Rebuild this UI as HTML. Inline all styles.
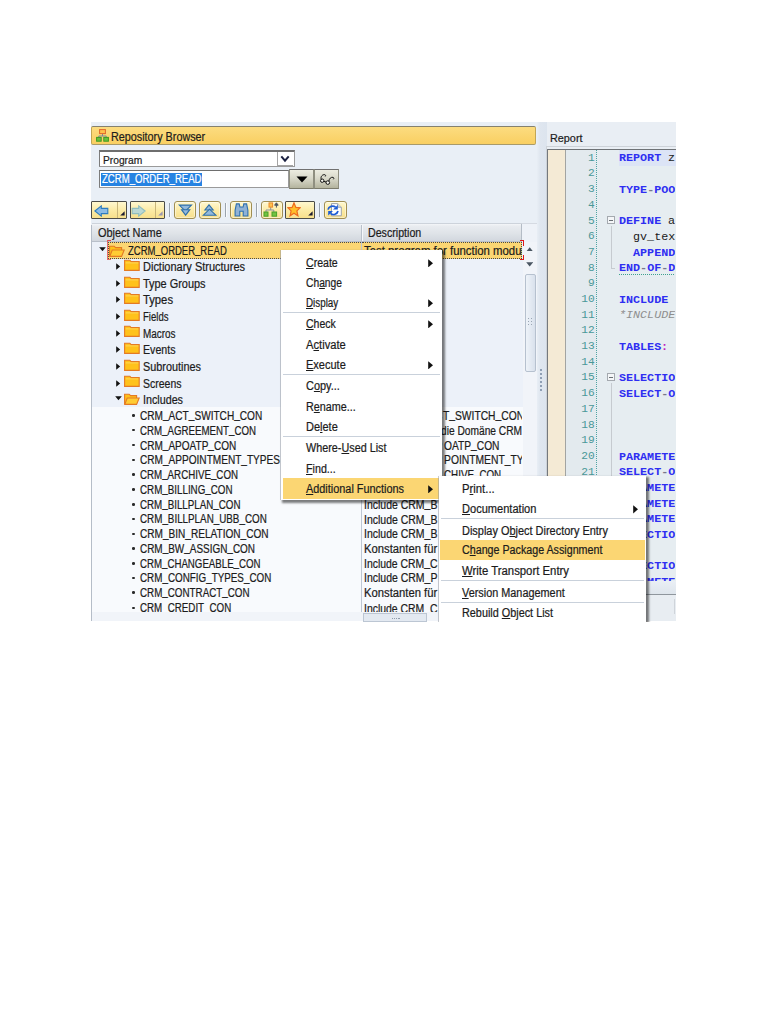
<!DOCTYPE html><html><head><meta charset="utf-8"><title>Repository Browser</title><style>html,body{margin:0;padding:0;background:#fff}body{width:768px;height:1024px;position:relative;overflow:hidden}u{text-decoration:underline;text-underline-offset:1px}.us{position:relative;top:-1.6px}</style></head><body><div style="position:absolute;left:91px;top:122px;width:585px;height:499.5px;overflow:hidden"><div style="position:absolute;left:-91px;top:-122px;width:768px;height:1024px"><div style="position:absolute;left:91px;top:122px;width:446px;height:499.3px;background:#E9EFF6"></div><div style="position:absolute;left:91.4px;top:126.2px;width:445.0px;height:18.5px;background:linear-gradient(#FCDC80,#F9CF62);border:1px solid #C2A654;border-top:1.5px solid #85816f;border-bottom-color:#A89A6A;border-radius:2px;box-sizing:border-box"></div><svg style="position:absolute;left:95.5px;top:129.4px" width="13" height="13" viewBox="0 0 13 13">
<path d="M6.5 4.5v2.5M2.8 9V7h7.4v2" fill="none" stroke="#7d8a99" stroke-width="1"/>
<rect x="3.6" y="0.6" width="5.8" height="4" fill="#FFC04A" stroke="#E0662A" stroke-width="1"/>
<rect x="0.6" y="8.4" width="4.6" height="3.8" fill="#6CC03C" stroke="#3E9A22" stroke-width="1"/>
<rect x="7.8" y="8.4" width="4.6" height="3.8" fill="#6CC03C" stroke="#3E9A22" stroke-width="1"/></svg><div style="position:absolute;left:99px;top:150.2px;width:195.5px;height:16.8px;background:#fff;border:1px solid #9a9a9a;border-top:2px solid #6e6e6e;border-left-color:#7c7c7c;box-sizing:border-box"></div><div style="position:absolute;left:277.3px;top:152.2px;width:16.2px;height:13.8px;background:#fff;border-left:1px solid #a4a4a4;border-bottom:1px solid #a4a4a4;box-sizing:border-box"></div><svg style="position:absolute;left:280px;top:155px" width="10" height="8" viewBox="0 0 10 8"><path d="M1.3 1.3L5 5.6L8.7 1.3" fill="none" stroke="#1a2040" stroke-width="2"/></svg><div style="position:absolute;left:99px;top:170px;width:189.6px;height:18px;background:#fff;border:1px solid #9a9a9a;border-top:1.5px solid #6e6e6e;border-left-color:#7c7c7c;box-sizing:border-box"></div><div style="position:absolute;left:101px;top:172.5px;width:101px;height:13.3px;background:#2683E2"></div><div style="position:absolute;left:288.8px;top:169px;width:25.4px;height:19.6px;background:linear-gradient(#EDEDE1,#D9D9CA 45%,#B4B49E);border:1px solid #8f8f80;border-top:1.6px solid #707070;border-bottom:1.6px solid #7c7c6c;box-sizing:border-box"></div><div style="position:absolute;left:314.2px;top:169px;width:24.8px;height:19.6px;background:linear-gradient(#EDEDE1,#D9D9CA 45%,#B4B49E);border:1px solid #8f8f80;border-top:1.6px solid #707070;border-bottom:1.6px solid #7c7c6c;box-sizing:border-box"></div><svg style="position:absolute;left:296px;top:175.5px" width="12" height="7" viewBox="0 0 12 7"><path d="M0.5 0.5h11L6 6.5z" fill="#000"/></svg><svg style="position:absolute;left:319px;top:173px" width="17" height="13" viewBox="0 0 17 13">
<circle cx="3.2" cy="7.7" r="1.7" fill="#f4f4ec" stroke="#111" stroke-width="1"/>
<circle cx="8.8" cy="9.6" r="1.8" fill="#f4f4ec" stroke="#111" stroke-width="1"/>
<path d="M4.8 8.3L7.1 9.1" fill="none" stroke="#111" stroke-width="1"/>
<path d="M2.2 6.3C1.4 3.6 3.4 1.3 5.8 1.7C6.8 1.9 6.9 3 6.2 3.5" fill="none" stroke="#111" stroke-width="1"/>
<path d="M9.9 8.2C10.1 5.6 12 3.9 14 4.3C15 4.6 15 5.9 14.4 6.3" fill="none" stroke="#111" stroke-width="1"/></svg><div style="position:absolute;left:91px;top:200.6px;width:36.4px;height:18.4px;background:linear-gradient(#FFF8D0,#FCEBA6 50%,#F8E08C);box-sizing:border-box;border:1px solid #4c4c48;border-radius:1px;"></div><div style="position:absolute;left:116.6px;top:201.6px;width:1.0px;height:16.4px;background:#c9b67a"></div><div style="position:absolute;left:129.6px;top:200.6px;width:35.8px;height:18.4px;background:linear-gradient(#FFF8D0,#FCEBA6 50%,#F8E08C);box-sizing:border-box;border:1px solid #4c4c48;border-radius:1px;"></div><div style="position:absolute;left:155px;top:201.6px;width:1px;height:16.4px;background:#c9b67a"></div><div style="position:absolute;left:174px;top:200.6px;width:22.4px;height:18.4px;background:linear-gradient(#FFF8D0,#FCEBA6 50%,#F8E08C);box-sizing:border-box;border:1px solid #A08E52;border-radius:3px;box-shadow:inset 0 0 0 1px rgba(255,255,255,.45);"></div><div style="position:absolute;left:198.7px;top:200.6px;width:22.1px;height:18.4px;background:linear-gradient(#FFF8D0,#FCEBA6 50%,#F8E08C);box-sizing:border-box;border:1px solid #A08E52;border-radius:3px;box-shadow:inset 0 0 0 1px rgba(255,255,255,.45);"></div><div style="position:absolute;left:230.3px;top:200.6px;width:21.3px;height:18.4px;background:linear-gradient(#FFF8D0,#FCEBA6 50%,#F8E08C);box-sizing:border-box;border:1px solid #A08E52;border-radius:3px;box-shadow:inset 0 0 0 1px rgba(255,255,255,.45);"></div><div style="position:absolute;left:261px;top:200.6px;width:21.8px;height:18.4px;background:linear-gradient(#FFF8D0,#FCEBA6 50%,#F8E08C);box-sizing:border-box;border:1px solid #A08E52;border-radius:3px;box-shadow:inset 0 0 0 1px rgba(255,255,255,.45);"></div><div style="position:absolute;left:284.7px;top:200.6px;width:30.1px;height:18.4px;background:linear-gradient(#FFF8D0,#FCEBA6 50%,#F8E08C);box-sizing:border-box;border:1px solid #4c4c48;border-radius:1px;"></div><div style="position:absolute;left:324px;top:200.6px;width:22.6px;height:18.4px;background:linear-gradient(#FFF8D0,#FCEBA6 50%,#F8E08C);box-sizing:border-box;border:1px solid #A08E52;border-radius:3px;box-shadow:inset 0 0 0 1px rgba(255,255,255,.45);"></div><div style="position:absolute;left:169px;top:202.5px;width:1px;height:14.0px;background:#9aa3ad"></div><div style="position:absolute;left:170px;top:202.5px;width:1px;height:14.0px;background:#f8fafc"></div><div style="position:absolute;left:224.6px;top:202.5px;width:1.0px;height:14.0px;background:#9aa3ad"></div><div style="position:absolute;left:225.6px;top:202.5px;width:1.0px;height:14.0px;background:#f8fafc"></div><div style="position:absolute;left:255.6px;top:202.5px;width:1.0px;height:14.0px;background:#9aa3ad"></div><div style="position:absolute;left:256.6px;top:202.5px;width:1.0px;height:14.0px;background:#f8fafc"></div><div style="position:absolute;left:319.4px;top:202.5px;width:1.0px;height:14.0px;background:#9aa3ad"></div><div style="position:absolute;left:320.4px;top:202.5px;width:1.0px;height:14.0px;background:#f8fafc"></div><svg style="position:absolute;left:93.5px;top:204.5px" width="15" height="12" viewBox="0 0 15 12"><path d="M0.9 6L7.3 0.9V3.4h6.5v5.2H7.3v2.5z" fill="#8CBCE6" stroke="#2E7CC0" stroke-width="1.1"/></svg><svg style="position:absolute;left:120px;top:211px" width="5" height="5" viewBox="0 0 5 5"><path d="M4.6 0.2v4.4h-4.4z" fill="#1c1c30"/></svg><svg style="position:absolute;left:131px;top:204.5px" width="15" height="12" viewBox="0 0 15 12"><path d="M14.1 6L7.7 0.9V3.4H1.2v5.2h6.5v2.5z" fill="#BBD8D4" stroke="#90BEC0" stroke-width="1.1"/></svg><svg style="position:absolute;left:157.6px;top:211px" width="5" height="5" viewBox="0 0 5 5"><path d="M4.6 0.2v4.4h-4.4z" fill="#9a96b0"/></svg><svg style="position:absolute;left:178px;top:203.5px" width="15" height="12" viewBox="0 0 15 12"><path d="M1.3 1.1h12.2L7.4 7.2z" fill="#93B9DC" stroke="#2E6FA8" stroke-width="1.1"/><path d="M3.5 5.7h8.3L7.6 11.2z" fill="#93B9DC" stroke="#2E6FA8" stroke-width="1.1"/></svg><svg style="position:absolute;left:202px;top:203.5px" width="15" height="12" viewBox="0 0 15 12"><path d="M2.9 6h8.3L7 0.8z" fill="#93B9DC" stroke="#2E6FA8" stroke-width="1.1"/><path d="M1.3 11.2h12.5L7.5 5.2z" fill="#93B9DC" stroke="#2E6FA8" stroke-width="1.1"/></svg><svg style="position:absolute;left:233.5px;top:202.5px" width="15" height="14" viewBox="0 0 15 14"><path d="M1.1 13V7.4L2.4 0.9h2.8L5.9 4h3.2l0.7-3.1h2.8l1.3 6.5V13H9.2V8.2H5.8V13z" fill="#8FB2D6" stroke="#2D6FB0" stroke-width="1.1"/></svg><svg style="position:absolute;left:263.3px;top:201.8px" width="17" height="15" viewBox="0 0 17 15"><path d="M7.7 5v3M3 10V8h7.8v2" fill="none" stroke="#8a929a" stroke-width="1"/>
<rect x="6" y="0.9" width="3.6" height="4.2" fill="#FFC24E" stroke="#EC8A2C" stroke-width="1"/>
<rect x="1" y="10" width="4" height="4.2" fill="#72C242" stroke="#46A028" stroke-width="1"/>
<rect x="9" y="10" width="4.6" height="4.2" fill="#72C242" stroke="#46A028" stroke-width="1"/>
<path d="M13.4 5.6V2.6M11.6 3.2L13.4 0.8L15.2 3.2z" fill="#4c5560" stroke="#4c5560" stroke-width="1"/></svg><svg style="position:absolute;left:287px;top:202.3px" width="14" height="15" viewBox="0 0 14 15"><path d="M7 0.9L8.9 5.4L13.2 5.8L9.9 8.9L10.9 13.8L7 11.2L3.1 13.8L4.1 8.9L0.8 5.8L5.1 5.4z" fill="#FFC02A" stroke="#EE6A1E" stroke-width="1.2"/></svg><svg style="position:absolute;left:308px;top:210.7px" width="5" height="5" viewBox="0 0 5 5"><path d="M4.6 0.2v4.4h-4.4z" fill="#1c1c30"/></svg><svg style="position:absolute;left:326.4px;top:203px" width="16" height="14" viewBox="0 0 16 14"><path d="M5.5 0.6h6.2l3.6 3.6v8.6H5.5z" fill="#fff" stroke="#9aa2ac" stroke-width="1"/><path d="M11.7 0.6v3.6h3.6" fill="#dde2e8" stroke="#9aa2ac" stroke-width="1"/>
<path d="M2 6.6A4.6 4.2 0 0 1 9.6 4.2" fill="none" stroke="#1C5CD6" stroke-width="1.7"/><path d="M11.8 2v4.6H7z" fill="#1C5CD6"/>
<path d="M12 8A4.6 4.2 0 0 1 4.4 10.4" fill="none" stroke="#1C5CD6" stroke-width="1.7"/><path d="M2.2 12.6V8h4.8z" fill="#1C5CD6"/></svg><div style="position:absolute;left:91.5px;top:223.3px;width:430.3px;height:18.3px;background:linear-gradient(#F4F6F9,#E9ECF0 12%,#DFE3E8 55%,#D2D7DE);border-top:1px solid #CDD3DB;border-bottom:1px solid #B9C0CA;box-sizing:border-box"></div><div style="position:absolute;left:521.8px;top:223.3px;width:15.7px;height:18.7px;background:#EEF2F8;border-top:1px solid #D5DAE2;box-sizing:border-box"></div><div style="position:absolute;left:361px;top:225px;width:1px;height:16px;background:#B9C1CB"></div><div style="position:absolute;left:362px;top:225px;width:1px;height:16px;background:#F5F7FA"></div><div style="position:absolute;left:521px;top:224px;width:1px;height:17.6px;background:#B4BCC6"></div><div style="position:absolute;left:91.5px;top:242px;width:431.5px;height:370.5px;background:#ECF1F9"></div><div style="position:absolute;left:91.5px;top:407.3px;width:431.5px;height:205.2px;background:#F8FAFD"></div><div style="position:absolute;left:91px;top:225px;width:1px;height:396px;background:#B5BDC8"></div><div style="position:absolute;left:361px;top:242px;width:1px;height:379.3px;background:#BEC7D3"></div><div style="position:absolute;left:107.5px;top:241.8px;width:253.5px;height:16.8px;background:#FBD673;border-top:1px dotted #4a4a4a;border-bottom:1px dotted #4a4a4a;box-sizing:border-box;border-left:1px dotted #4a4a4a"></div><div style="position:absolute;left:362px;top:241.8px;width:159.9px;height:16.8px;background:#FBD673;border-top:1px dotted #4a4a4a;border-bottom:1px dotted #4a4a4a;box-sizing:border-box;border-right:1px dotted #4a4a4a"></div><div style="position:absolute;left:106.6px;top:240px;width:4.0px;height:20.4px;border:1px solid #E8463C;border-top:1.4px solid #E01818;border-right:none;box-sizing:border-box;opacity:.75"></div><div style="position:absolute;left:522.5px;top:242px;width:15.3px;height:370.5px;background:#F1F4F9"></div><svg style="position:absolute;left:526px;top:246.6px" width="7.4" height="4.8" viewBox="0 0 7.4 4.8"><path d="M0.2 4.6h7L3.7 0.3z" fill="#4a5662"/></svg><svg style="position:absolute;left:526px;top:262.4px" width="7.4" height="4.8" viewBox="0 0 7.4 4.8"><path d="M0.2 0.2h7L3.7 4.5z" fill="#4a5662"/></svg><div style="position:absolute;left:524.5px;top:274px;width:11.5px;height:98px;background:linear-gradient(90deg,#EEF3F9,#D9E1EC);border:1px solid #B6C1CF;border-radius:2px;box-sizing:border-box"></div><div style="position:absolute;left:528.3px;top:318px;width:1.0px;height:1px;background:#9aa6b4"></div><div style="position:absolute;left:531.3px;top:318px;width:1.0px;height:1px;background:#9aa6b4"></div><div style="position:absolute;left:528.3px;top:321px;width:1.0px;height:1px;background:#9aa6b4"></div><div style="position:absolute;left:531.3px;top:321px;width:1.0px;height:1px;background:#9aa6b4"></div><div style="position:absolute;left:528.3px;top:324px;width:1.0px;height:1px;background:#9aa6b4"></div><div style="position:absolute;left:531.3px;top:324px;width:1.0px;height:1px;background:#9aa6b4"></div><div style="position:absolute;left:519.5px;top:240px;width:4.5px;height:6px;border-top:1.2px solid #E01818;border-right:1.2px solid #E01818;box-sizing:border-box"></div><div style="position:absolute;left:519.5px;top:254.6px;width:4.5px;height:5.8px;border-bottom:1.2px solid #E01818;border-right:1.2px solid #E01818;box-sizing:border-box"></div><div style="position:absolute;left:91.5px;top:612.4px;width:445.5px;height:8.9px;background:#F1F4F9"></div><div style="position:absolute;left:363px;top:613.2px;width:64px;height:8.8px;background:#E3E9F1;border:1px solid #BCC6D3;box-sizing:border-box"></div><div style="position:absolute;left:391.5px;top:618px;width:1.2px;height:1.2px;background:#8f9cab"></div><div style="position:absolute;left:393.8px;top:618px;width:1.2px;height:1.2px;background:#8f9cab"></div><div style="position:absolute;left:396.1px;top:618px;width:1.2px;height:1.2px;background:#8f9cab"></div><div style="position:absolute;left:398.4px;top:618px;width:1.2px;height:1.2px;background:#8f9cab"></div><div style="position:absolute;left:537px;top:122px;width:10px;height:499.3px;background:linear-gradient(90deg,#E8EEF5,#DFE6EF 30%,#DCE4EE)"></div><div style="position:absolute;left:540.3px;top:369px;width:1.7px;height:2px;background:#8f9fb4"></div><div style="position:absolute;left:540.3px;top:373px;width:1.7px;height:2px;background:#8f9fb4"></div><div style="position:absolute;left:540.3px;top:377px;width:1.7px;height:2px;background:#8f9fb4"></div><div style="position:absolute;left:540.3px;top:381px;width:1.7px;height:2px;background:#8f9fb4"></div><div style="position:absolute;left:540.3px;top:385px;width:1.7px;height:2px;background:#8f9fb4"></div><div style="position:absolute;left:540.3px;top:389px;width:1.7px;height:2px;background:#8f9fb4"></div><div style="position:absolute;left:547px;top:122px;width:129.3px;height:499.3px;background:#E9EEF4"></div><div style="position:absolute;left:545.6px;top:146.3px;width:130.7px;height:0.9px;background:#CDD2D8"></div><div style="position:absolute;left:545.6px;top:146.3px;width:0.8px;height:475.0px;background:#CDD2D8"></div><div style="position:absolute;left:546.7px;top:149px;width:129.6px;height:1.1px;background:#6e7276"></div><div style="position:absolute;left:546.7px;top:149px;width:1.1px;height:472.3px;background:#74787d"></div><div style="position:absolute;left:547.8px;top:150.1px;width:128.5px;height:430.9px;background:#E6EDF1"></div><div style="position:absolute;left:547.8px;top:150.1px;width:17.2px;height:430.9px;background:#F4EAD5"></div><div style="position:absolute;left:565px;top:150.1px;width:31px;height:430.9px;background:#E3EAEE"></div><div style="position:absolute;left:595.6px;top:150.1px;width:1.0px;height:430.9px;border-left:1px dotted #4FA3A3"></div><div style="position:absolute;left:564.9px;top:150.1px;width:0.9px;height:430.9px;background:#A2A4A2"></div><div style="position:absolute;left:619px;top:150.1px;width:57.3px;height:15.5px;background:#DCE4F6"></div><div style="position:absolute;left:548.2px;top:581px;width:128.1px;height:13.2px;background:linear-gradient(#EAEFF5,#DEE5EC)"></div><div style="position:absolute;left:548.2px;top:594.2px;width:128.1px;height:1.2px;background:#8f969d"></div><div style="position:absolute;left:548.2px;top:595.4px;width:128.1px;height:25.9px;background:#E8EDF2"></div><div style="position:absolute;left:673.8px;top:599px;width:0.9px;height:15px;background:#CFD4DA"></div><span style="position:absolute;left:111.3px;top:128.8px;height:16.4px;line-height:16.4px;font:normal normal 12.4px/16.4px 'Liberation Sans', sans-serif;color:#1c1c1c;white-space:pre;transform-origin:0 50%;transform:scaleX(0.8712);-webkit-text-stroke:0.22px;">Repository Browser</span><span style="position:absolute;left:102.5px;top:152.1px;height:15.6px;line-height:15.6px;font:normal normal 11.6px/15.6px 'Liberation Sans', sans-serif;color:#1c1c1c;white-space:pre;transform-origin:0 50%;transform:scaleX(0.8826);-webkit-text-stroke:0.22px;">Program</span><span style="position:absolute;left:102px;top:171.2px;height:16px;line-height:16px;font:normal normal 12px/16px 'Liberation Sans', sans-serif;color:#fff;white-space:pre;transform-origin:0 50%;transform:scaleX(0.7977);-webkit-text-stroke:0.22px;">ZCRM<span class="us">_</span>ORDER<span class="us">_</span>READ</span><span style="position:absolute;left:98px;top:225.0px;height:16px;line-height:16px;font:normal normal 12px/16px 'Liberation Sans', sans-serif;color:#1c1c1c;white-space:pre;transform-origin:0 50%;transform:scaleX(0.9103);-webkit-text-stroke:0.22px;">Object Name</span><span style="position:absolute;left:367.5px;top:225.0px;height:16px;line-height:16px;font:normal normal 12px/16px 'Liberation Sans', sans-serif;color:#1c1c1c;white-space:pre;transform-origin:0 50%;transform:scaleX(0.8870);-webkit-text-stroke:0.22px;">Description</span><span style="position:absolute;left:549.7px;top:129.7px;height:15.6px;line-height:15.6px;font:normal normal 11.6px/15.6px 'Liberation Sans', sans-serif;color:#1c1c1c;white-space:pre;transform-origin:0 50%;transform:scaleX(0.9336);-webkit-text-stroke:0.22px;">Report</span><div style="position:absolute;left:92px;top:241px;width:269px;height:371.4px;overflow:hidden;"><div style="position:absolute;left:-92px;top:-241px;width:768px;height:1024px"><svg style="position:absolute;left:99.2px;top:246.60000000000002px" width="7" height="4.4" viewBox="0 0 7 4.4"><path d="M0.2 0.2h6.6L3.5 4.2z" fill="#111"/></svg><svg style="position:absolute;left:109px;top:243.6px" width="16" height="14" viewBox="0 0 16 14"><path d="M0.6 12.2V2.2h4.6l1.4 1.4h6v2.4" fill="#FFC21A" stroke="#E47A24" stroke-width="1.1"/><path d="M0.8 12.4L3.2 6h12L12.6 12.4z" fill="#FFCC33" stroke="#E47A24" stroke-width="1.1"/></svg><svg style="position:absolute;left:116.2px;top:262.9px" width="4.4" height="7" viewBox="0 0 4.4 7"><path d="M0.2 0.2L4.2 3.5L0.2 6.8z" fill="#111"/></svg><svg style="position:absolute;left:124.2px;top:257.8px" width="16" height="14" viewBox="0 0 16 14"><path d="M0.6 2.2h5.2l1.4 1.4h8v8.8H0.6z" fill="#FFC21A" stroke="#E47A24" stroke-width="1.1"/><path d="M1.6 4.9h12.8" stroke="#FFD75C" stroke-width="1"/></svg><svg style="position:absolute;left:116.2px;top:279.65px" width="4.4" height="7" viewBox="0 0 4.4 7"><path d="M0.2 0.2L4.2 3.5L0.2 6.8z" fill="#111"/></svg><svg style="position:absolute;left:124.2px;top:274.55px" width="16" height="14" viewBox="0 0 16 14"><path d="M0.6 2.2h5.2l1.4 1.4h8v8.8H0.6z" fill="#FFC21A" stroke="#E47A24" stroke-width="1.1"/><path d="M1.6 4.9h12.8" stroke="#FFD75C" stroke-width="1"/></svg><svg style="position:absolute;left:116.2px;top:296.09999999999997px" width="4.4" height="7" viewBox="0 0 4.4 7"><path d="M0.2 0.2L4.2 3.5L0.2 6.8z" fill="#111"/></svg><svg style="position:absolute;left:124.2px;top:291.0px" width="16" height="14" viewBox="0 0 16 14"><path d="M0.6 2.2h5.2l1.4 1.4h8v8.8H0.6z" fill="#FFC21A" stroke="#E47A24" stroke-width="1.1"/><path d="M1.6 4.9h12.8" stroke="#FFD75C" stroke-width="1"/></svg><svg style="position:absolute;left:116.2px;top:312.65px" width="4.4" height="7" viewBox="0 0 4.4 7"><path d="M0.2 0.2L4.2 3.5L0.2 6.8z" fill="#111"/></svg><svg style="position:absolute;left:124.2px;top:307.55px" width="16" height="14" viewBox="0 0 16 14"><path d="M0.6 2.2h5.2l1.4 1.4h8v8.8H0.6z" fill="#FFC21A" stroke="#E47A24" stroke-width="1.1"/><path d="M1.6 4.9h12.8" stroke="#FFD75C" stroke-width="1"/></svg><svg style="position:absolute;left:116.2px;top:329.5px" width="4.4" height="7" viewBox="0 0 4.4 7"><path d="M0.2 0.2L4.2 3.5L0.2 6.8z" fill="#111"/></svg><svg style="position:absolute;left:124.2px;top:324.40000000000003px" width="16" height="14" viewBox="0 0 16 14"><path d="M0.6 2.2h5.2l1.4 1.4h8v8.8H0.6z" fill="#FFC21A" stroke="#E47A24" stroke-width="1.1"/><path d="M1.6 4.9h12.8" stroke="#FFD75C" stroke-width="1"/></svg><svg style="position:absolute;left:116.2px;top:346.09999999999997px" width="4.4" height="7" viewBox="0 0 4.4 7"><path d="M0.2 0.2L4.2 3.5L0.2 6.8z" fill="#111"/></svg><svg style="position:absolute;left:124.2px;top:341.0px" width="16" height="14" viewBox="0 0 16 14"><path d="M0.6 2.2h5.2l1.4 1.4h8v8.8H0.6z" fill="#FFC21A" stroke="#E47A24" stroke-width="1.1"/><path d="M1.6 4.9h12.8" stroke="#FFD75C" stroke-width="1"/></svg><svg style="position:absolute;left:116.2px;top:362.65px" width="4.4" height="7" viewBox="0 0 4.4 7"><path d="M0.2 0.2L4.2 3.5L0.2 6.8z" fill="#111"/></svg><svg style="position:absolute;left:124.2px;top:357.55px" width="16" height="14" viewBox="0 0 16 14"><path d="M0.6 2.2h5.2l1.4 1.4h8v8.8H0.6z" fill="#FFC21A" stroke="#E47A24" stroke-width="1.1"/><path d="M1.6 4.9h12.8" stroke="#FFD75C" stroke-width="1"/></svg><svg style="position:absolute;left:116.2px;top:379.5px" width="4.4" height="7" viewBox="0 0 4.4 7"><path d="M0.2 0.2L4.2 3.5L0.2 6.8z" fill="#111"/></svg><svg style="position:absolute;left:124.2px;top:374.40000000000003px" width="16" height="14" viewBox="0 0 16 14"><path d="M0.6 2.2h5.2l1.4 1.4h8v8.8H0.6z" fill="#FFC21A" stroke="#E47A24" stroke-width="1.1"/><path d="M1.6 4.9h12.8" stroke="#FFD75C" stroke-width="1"/></svg><svg style="position:absolute;left:115px;top:396.3px" width="7" height="4.4" viewBox="0 0 7 4.4"><path d="M0.2 0.2h6.6L3.5 4.2z" fill="#111"/></svg><svg style="position:absolute;left:124.3px;top:392.2px" width="16" height="14" viewBox="0 0 16 14"><path d="M0.6 12.2V2.2h4.6l1.4 1.4h6v2.4" fill="#FFC21A" stroke="#E47A24" stroke-width="1.1"/><path d="M0.8 12.4L3.2 6h12L12.6 12.4z" fill="#FFCC33" stroke="#E47A24" stroke-width="1.1"/></svg><div style="position:absolute;left:132px;top:414.2px;width:2.6px;height:2.6px;background:#2a2a2a;border-radius:1.3px"></div><div style="position:absolute;left:132px;top:428.9px;width:2.6px;height:2.6px;background:#2a2a2a;border-radius:1.3px"></div><div style="position:absolute;left:132px;top:443.9px;width:2.6px;height:2.6px;background:#2a2a2a;border-radius:1.3px"></div><div style="position:absolute;left:132px;top:458.7px;width:2.6px;height:2.6px;background:#2a2a2a;border-radius:1.3px"></div><div style="position:absolute;left:132px;top:473.4px;width:2.6px;height:2.6px;background:#2a2a2a;border-radius:1.3px"></div><div style="position:absolute;left:132px;top:488.0px;width:2.6px;height:2.6px;background:#2a2a2a;border-radius:1.3px"></div><div style="position:absolute;left:132px;top:503.0px;width:2.6px;height:2.6px;background:#2a2a2a;border-radius:1.3px"></div><div style="position:absolute;left:132px;top:517.8px;width:2.6px;height:2.6px;background:#2a2a2a;border-radius:1.3px"></div><div style="position:absolute;left:132px;top:532.6px;width:2.6px;height:2.6px;background:#2a2a2a;border-radius:1.3px"></div><div style="position:absolute;left:132px;top:547.4px;width:2.6px;height:2.6px;background:#2a2a2a;border-radius:1.3px"></div><div style="position:absolute;left:132px;top:562.1999999999999px;width:2.6px;height:2.6px;background:#2a2a2a;border-radius:1.3px"></div><div style="position:absolute;left:132px;top:576.8px;width:2.6px;height:2.6px;background:#2a2a2a;border-radius:1.3px"></div><div style="position:absolute;left:132px;top:591.4px;width:2.6px;height:2.6px;background:#2a2a2a;border-radius:1.3px"></div><div style="position:absolute;left:132px;top:606.6px;width:2.6px;height:2.6px;background:#2a2a2a;border-radius:1.3px"></div><span style="position:absolute;left:128px;top:242.5px;height:16px;line-height:16px;font:normal normal 12px/16px 'Liberation Sans', sans-serif;color:#1c1c1c;white-space:pre;transform-origin:0 50%;transform:scaleX(0.7917);-webkit-text-stroke:0.22px;">ZCRM<span class="us">_</span>ORDER<span class="us">_</span>READ</span><span style="position:absolute;left:143px;top:259.0px;height:16px;line-height:16px;font:normal normal 12px/16px 'Liberation Sans', sans-serif;color:#1c1c1c;white-space:pre;transform-origin:0 50%;transform:scaleX(0.9158);-webkit-text-stroke:0.22px;">Dictionary Structures</span><span style="position:absolute;left:143px;top:275.75px;height:16px;line-height:16px;font:normal normal 12px/16px 'Liberation Sans', sans-serif;color:#1c1c1c;white-space:pre;transform-origin:0 50%;transform:scaleX(0.9097);-webkit-text-stroke:0.22px;">Type Groups</span><span style="position:absolute;left:143px;top:292.2px;height:16px;line-height:16px;font:normal normal 12px/16px 'Liberation Sans', sans-serif;color:#1c1c1c;white-space:pre;transform-origin:0 50%;transform:scaleX(0.9370);-webkit-text-stroke:0.22px;">Types</span><span style="position:absolute;left:143px;top:308.75px;height:16px;line-height:16px;font:normal normal 12px/16px 'Liberation Sans', sans-serif;color:#1c1c1c;white-space:pre;transform-origin:0 50%;transform:scaleX(0.7965);-webkit-text-stroke:0.22px;">Fields</span><span style="position:absolute;left:143px;top:325.6px;height:16px;line-height:16px;font:normal normal 12px/16px 'Liberation Sans', sans-serif;color:#1c1c1c;white-space:pre;transform-origin:0 50%;transform:scaleX(0.8261);-webkit-text-stroke:0.22px;">Macros</span><span style="position:absolute;left:143px;top:342.2px;height:16px;line-height:16px;font:normal normal 12px/16px 'Liberation Sans', sans-serif;color:#1c1c1c;white-space:pre;transform-origin:0 50%;transform:scaleX(0.8859);-webkit-text-stroke:0.22px;">Events</span><span style="position:absolute;left:143px;top:358.75px;height:16px;line-height:16px;font:normal normal 12px/16px 'Liberation Sans', sans-serif;color:#1c1c1c;white-space:pre;transform-origin:0 50%;transform:scaleX(0.9056);-webkit-text-stroke:0.22px;">Subroutines</span><span style="position:absolute;left:143px;top:375.6px;height:16px;line-height:16px;font:normal normal 12px/16px 'Liberation Sans', sans-serif;color:#1c1c1c;white-space:pre;transform-origin:0 50%;transform:scaleX(0.8744);-webkit-text-stroke:0.22px;">Screens</span><span style="position:absolute;left:143px;top:392.2px;height:16px;line-height:16px;font:normal normal 12px/16px 'Liberation Sans', sans-serif;color:#1c1c1c;white-space:pre;transform-origin:0 50%;transform:scaleX(0.8948);-webkit-text-stroke:0.22px;">Includes</span><span style="position:absolute;left:140px;top:407.8px;height:16px;line-height:16px;font:normal normal 12px/16px 'Liberation Sans', sans-serif;color:#1c1c1c;white-space:pre;transform-origin:0 50%;transform:scaleX(0.8408);-webkit-text-stroke:0.22px;">CRM<span class="us">_</span>ACT<span class="us">_</span>SWITCH<span class="us">_</span>CON</span><span style="position:absolute;left:140px;top:422.5px;height:16px;line-height:16px;font:normal normal 12px/16px 'Liberation Sans', sans-serif;color:#1c1c1c;white-space:pre;transform-origin:0 50%;transform:scaleX(0.8090);-webkit-text-stroke:0.22px;">CRM<span class="us">_</span>AGREEMENT<span class="us">_</span>CON</span><span style="position:absolute;left:140px;top:437.5px;height:16px;line-height:16px;font:normal normal 12px/16px 'Liberation Sans', sans-serif;color:#1c1c1c;white-space:pre;transform-origin:0 50%;transform:scaleX(0.8357);-webkit-text-stroke:0.22px;">CRM<span class="us">_</span>APOATP<span class="us">_</span>CON</span><span style="position:absolute;left:140px;top:452.3px;height:16px;line-height:16px;font:normal normal 12px/16px 'Liberation Sans', sans-serif;color:#1c1c1c;white-space:pre;transform-origin:0 50%;transform:scaleX(0.8397);-webkit-text-stroke:0.22px;">CRM<span class="us">_</span>APPOINTMENT<span class="us">_</span>TYPES</span><span style="position:absolute;left:140px;top:467.0px;height:16px;line-height:16px;font:normal normal 12px/16px 'Liberation Sans', sans-serif;color:#1c1c1c;white-space:pre;transform-origin:0 50%;transform:scaleX(0.8118);-webkit-text-stroke:0.22px;">CRM<span class="us">_</span>ARCHIVE<span class="us">_</span>CON</span><span style="position:absolute;left:140px;top:481.6px;height:16px;line-height:16px;font:normal normal 12px/16px 'Liberation Sans', sans-serif;color:#1c1c1c;white-space:pre;transform-origin:0 50%;transform:scaleX(0.8157);-webkit-text-stroke:0.22px;">CRM<span class="us">_</span>BILLING<span class="us">_</span>CON</span><span style="position:absolute;left:140px;top:496.6px;height:16px;line-height:16px;font:normal normal 12px/16px 'Liberation Sans', sans-serif;color:#1c1c1c;white-space:pre;transform-origin:0 50%;transform:scaleX(0.8143);-webkit-text-stroke:0.22px;">CRM<span class="us">_</span>BILLPLAN<span class="us">_</span>CON</span><span style="position:absolute;left:140px;top:511.4px;height:16px;line-height:16px;font:normal normal 12px/16px 'Liberation Sans', sans-serif;color:#1c1c1c;white-space:pre;transform-origin:0 50%;transform:scaleX(0.8188);-webkit-text-stroke:0.22px;">CRM<span class="us">_</span>BILLPLAN<span class="us">_</span>UBB<span class="us">_</span>CON</span><span style="position:absolute;left:140px;top:526.2px;height:16px;line-height:16px;font:normal normal 12px/16px 'Liberation Sans', sans-serif;color:#1c1c1c;white-space:pre;transform-origin:0 50%;transform:scaleX(0.8388);-webkit-text-stroke:0.22px;">CRM<span class="us">_</span>BIN<span class="us">_</span>RELATION<span class="us">_</span>CON</span><span style="position:absolute;left:140px;top:541.0px;height:16px;line-height:16px;font:normal normal 12px/16px 'Liberation Sans', sans-serif;color:#1c1c1c;white-space:pre;transform-origin:0 50%;transform:scaleX(0.8287);-webkit-text-stroke:0.22px;">CRM<span class="us">_</span>BW<span class="us">_</span>ASSIGN<span class="us">_</span>CON</span><span style="position:absolute;left:140px;top:555.8px;height:16px;line-height:16px;font:normal normal 12px/16px 'Liberation Sans', sans-serif;color:#1c1c1c;white-space:pre;transform-origin:0 50%;transform:scaleX(0.8065);-webkit-text-stroke:0.22px;">CRM<span class="us">_</span>CHANGEABLE<span class="us">_</span>CON</span><span style="position:absolute;left:140px;top:570.4px;height:16px;line-height:16px;font:normal normal 12px/16px 'Liberation Sans', sans-serif;color:#1c1c1c;white-space:pre;transform-origin:0 50%;transform:scaleX(0.8198);-webkit-text-stroke:0.22px;">CRM<span class="us">_</span>CONFIG<span class="us">_</span>TYPES<span class="us">_</span>CON</span><span style="position:absolute;left:140px;top:585.0px;height:16px;line-height:16px;font:normal normal 12px/16px 'Liberation Sans', sans-serif;color:#1c1c1c;white-space:pre;transform-origin:0 50%;transform:scaleX(0.8169);-webkit-text-stroke:0.22px;">CRM<span class="us">_</span>CONTRACT<span class="us">_</span>CON</span><span style="position:absolute;left:140px;top:600.2px;height:16px;line-height:16px;font:normal normal 12px/16px 'Liberation Sans', sans-serif;color:#1c1c1c;white-space:pre;transform-origin:0 50%;transform:scaleX(0.8144);-webkit-text-stroke:0.22px;">CRM<span class="us">_</span>CREDIT<span class="us">_</span>CON</span></div></div><div style="position:absolute;left:362px;top:241px;width:159.9px;height:371.4px;overflow:hidden;"><div style="position:absolute;left:-362px;top:-241px;width:768px;height:1024px"><span style="position:absolute;left:364px;top:242.5px;height:16px;line-height:16px;font:normal normal 12px/16px 'Liberation Sans', sans-serif;color:#1c1c1c;white-space:pre;transform-origin:0 50%;transform:scaleX(0.9483);-webkit-text-stroke:0.22px;">Test program for function modu</span><span style="position:absolute;left:363.75px;top:407.8px;height:16px;line-height:16px;font:normal normal 12px/16px 'Liberation Sans', sans-serif;color:#1c1c1c;white-space:pre;transform-origin:0 50%;transform:scaleX(0.8461);-webkit-text-stroke:0.22px;">Include CRM<span class="us">_</span>AC</span><span style="position:absolute;left:443.4px;top:407.8px;height:16px;line-height:16px;font:normal normal 12px/16px 'Liberation Sans', sans-serif;color:#1c1c1c;white-space:pre;transform-origin:0 50%;transform:scaleX(0.8562);-webkit-text-stroke:0.22px;">T<span class="us">_</span>SWITCH<span class="us">_</span>CON</span><span style="position:absolute;left:363.75px;top:422.6px;height:16px;line-height:16px;font:normal normal 12px/16px 'Liberation Sans', sans-serif;color:#1c1c1c;white-space:pre;transform-origin:0 50%;transform:scaleX(0.9384);-webkit-text-stroke:0.22px;">Konstanten für</span><span style="position:absolute;left:441.4px;top:422.6px;height:16px;line-height:16px;font:normal normal 12px/16px 'Liberation Sans', sans-serif;color:#1c1c1c;white-space:pre;transform-origin:0 50%;transform:scaleX(0.8503);-webkit-text-stroke:0.22px;">die Domäne CRM</span><span style="position:absolute;left:363.75px;top:437.5px;height:16px;line-height:16px;font:normal normal 12px/16px 'Liberation Sans', sans-serif;color:#1c1c1c;white-space:pre;transform-origin:0 50%;transform:scaleX(0.8521);-webkit-text-stroke:0.22px;">Include CRM<span class="us">_</span>AP</span><span style="position:absolute;left:443.8px;top:437.5px;height:16px;line-height:16px;font:normal normal 12px/16px 'Liberation Sans', sans-serif;color:#1c1c1c;white-space:pre;transform-origin:0 50%;transform:scaleX(0.8520);-webkit-text-stroke:0.22px;">OATP<span class="us">_</span>CON</span><span style="position:absolute;left:363.75px;top:452.3px;height:16px;line-height:16px;font:normal normal 12px/16px 'Liberation Sans', sans-serif;color:#1c1c1c;white-space:pre;transform-origin:0 50%;transform:scaleX(0.8521);-webkit-text-stroke:0.22px;">Include CRM<span class="us">_</span>AP</span><span style="position:absolute;left:443.8px;top:452.3px;height:16px;line-height:16px;font:normal normal 12px/16px 'Liberation Sans', sans-serif;color:#1c1c1c;white-space:pre;transform-origin:0 50%;transform:scaleX(0.8597);-webkit-text-stroke:0.22px;">POINTMENT<span class="us">_</span>TY</span><span style="position:absolute;left:363.75px;top:467.0px;height:16px;line-height:16px;font:normal normal 12px/16px 'Liberation Sans', sans-serif;color:#1c1c1c;white-space:pre;transform-origin:0 50%;transform:scaleX(0.8461);-webkit-text-stroke:0.22px;">Include CRM<span class="us">_</span>AR</span><span style="position:absolute;left:443.8px;top:467.0px;height:16px;line-height:16px;font:normal normal 12px/16px 'Liberation Sans', sans-serif;color:#1c1c1c;white-space:pre;transform-origin:0 50%;transform:scaleX(0.8166);-webkit-text-stroke:0.22px;">CHIVE<span class="us">_</span>CON</span><span style="position:absolute;left:363.75px;top:481.6px;height:16px;line-height:16px;font:normal normal 12px/16px 'Liberation Sans', sans-serif;color:#1c1c1c;white-space:pre;transform-origin:0 50%;transform:scaleX(0.8738);-webkit-text-stroke:0.22px;">Include CRM<span class="us">_</span>B</span><span style="position:absolute;left:440px;top:481.6px;height:16px;line-height:16px;font:normal normal 12px/16px 'Liberation Sans', sans-serif;color:#1c1c1c;white-space:pre;transform-origin:0 50%;transform:scaleX(0.8406);-webkit-text-stroke:0.22px;">ILLING<span class="us">_</span>CON</span><span style="position:absolute;left:363.75px;top:496.8px;height:16px;line-height:16px;font:normal normal 12px/16px 'Liberation Sans', sans-serif;color:#1c1c1c;white-space:pre;transform-origin:0 50%;transform:scaleX(0.8738);-webkit-text-stroke:0.22px;">Include CRM<span class="us">_</span>B</span><span style="position:absolute;left:440px;top:496.8px;height:16px;line-height:16px;font:normal normal 12px/16px 'Liberation Sans', sans-serif;color:#1c1c1c;white-space:pre;transform-origin:0 50%;transform:scaleX(0.8355);-webkit-text-stroke:0.22px;">ILLPLAN<span class="us">_</span>CON</span><span style="position:absolute;left:363.75px;top:511.5px;height:16px;line-height:16px;font:normal normal 12px/16px 'Liberation Sans', sans-serif;color:#1c1c1c;white-space:pre;transform-origin:0 50%;transform:scaleX(0.8738);-webkit-text-stroke:0.22px;">Include CRM<span class="us">_</span>B</span><span style="position:absolute;left:440px;top:511.5px;height:16px;line-height:16px;font:normal normal 12px/16px 'Liberation Sans', sans-serif;color:#1c1c1c;white-space:pre;transform-origin:0 50%;transform:scaleX(0.8336);-webkit-text-stroke:0.22px;">ILLPLAN<span class="us">_</span>UBB<span class="us">_</span>CON</span><span style="position:absolute;left:363.75px;top:526.2px;height:16px;line-height:16px;font:normal normal 12px/16px 'Liberation Sans', sans-serif;color:#1c1c1c;white-space:pre;transform-origin:0 50%;transform:scaleX(0.8738);-webkit-text-stroke:0.22px;">Include CRM<span class="us">_</span>B</span><span style="position:absolute;left:440px;top:526.2px;height:16px;line-height:16px;font:normal normal 12px/16px 'Liberation Sans', sans-serif;color:#1c1c1c;white-space:pre;transform-origin:0 50%;transform:scaleX(0.8635);-webkit-text-stroke:0.22px;">IN<span class="us">_</span>RELATION<span class="us">_</span>CON</span><span style="position:absolute;left:363.75px;top:541.0px;height:16px;line-height:16px;font:normal normal 12px/16px 'Liberation Sans', sans-serif;color:#1c1c1c;white-space:pre;transform-origin:0 50%;transform:scaleX(0.9384);-webkit-text-stroke:0.22px;">Konstanten für</span><span style="position:absolute;left:441px;top:541.0px;height:16px;line-height:16px;font:normal normal 12px/16px 'Liberation Sans', sans-serif;color:#1c1c1c;white-space:pre;transform-origin:0 50%;transform:scaleX(0.9353);-webkit-text-stroke:0.22px;">die BW-Zuordnung</span><span style="position:absolute;left:363.75px;top:555.8px;height:16px;line-height:16px;font:normal normal 12px/16px 'Liberation Sans', sans-serif;color:#1c1c1c;white-space:pre;transform-origin:0 50%;transform:scaleX(0.8693);-webkit-text-stroke:0.22px;">Include CRM<span class="us">_</span>C</span><span style="position:absolute;left:440px;top:555.8px;height:16px;line-height:16px;font:normal normal 12px/16px 'Liberation Sans', sans-serif;color:#1c1c1c;white-space:pre;transform-origin:0 50%;transform:scaleX(0.8246);-webkit-text-stroke:0.22px;">HANGEABLE<span class="us">_</span>CON</span><span style="position:absolute;left:363.75px;top:570.2px;height:16px;line-height:16px;font:normal normal 12px/16px 'Liberation Sans', sans-serif;color:#1c1c1c;white-space:pre;transform-origin:0 50%;transform:scaleX(0.8738);-webkit-text-stroke:0.22px;">Include CRM<span class="us">_</span>P</span><span style="position:absolute;left:440px;top:570.2px;height:16px;line-height:16px;font:normal normal 12px/16px 'Liberation Sans', sans-serif;color:#1c1c1c;white-space:pre;transform-origin:0 50%;transform:scaleX(0.8580);-webkit-text-stroke:0.22px;">ROCESS<span class="us">_</span>TYPES</span><span style="position:absolute;left:363.75px;top:585.0px;height:16px;line-height:16px;font:normal normal 12px/16px 'Liberation Sans', sans-serif;color:#1c1c1c;white-space:pre;transform-origin:0 50%;transform:scaleX(0.9384);-webkit-text-stroke:0.22px;">Konstanten für</span><span style="position:absolute;left:441px;top:585.0px;height:16px;line-height:16px;font:normal normal 12px/16px 'Liberation Sans', sans-serif;color:#1c1c1c;white-space:pre;transform-origin:0 50%;transform:scaleX(1.0140);-webkit-text-stroke:0.22px;">den Kontrakt</span><span style="position:absolute;left:363.75px;top:600.6px;height:16px;line-height:16px;font:normal normal 12px/16px 'Liberation Sans', sans-serif;color:#1c1c1c;white-space:pre;transform-origin:0 50%;transform:scaleX(0.8693);-webkit-text-stroke:0.22px;">Include CRM<span class="us">_</span>C</span><span style="position:absolute;left:440px;top:600.6px;height:16px;line-height:16px;font:normal normal 12px/16px 'Liberation Sans', sans-serif;color:#1c1c1c;white-space:pre;transform-origin:0 50%;transform:scaleX(0.8362);-webkit-text-stroke:0.22px;">REDIT<span class="us">_</span>CON</span></div></div><div style="position:absolute;left:547.8px;top:150.1px;width:127.7px;height:430.9px;overflow:hidden;"><div style="position:absolute;left:-547.8px;top:-150.1px;width:768px;height:1024px"><div style="position:absolute;left:607px;top:216.06px;width:8.4px;height:8.4px;background:#F4F6F8;border:1px solid #A4A9AF;box-sizing:border-box"></div><div style="position:absolute;left:609px;top:219.76px;width:4.4px;height:1.0px;background:#6a6f75"></div><div style="position:absolute;left:607px;top:372.96000000000004px;width:8.4px;height:8.4px;background:#F4F6F8;border:1px solid #A4A9AF;box-sizing:border-box"></div><div style="position:absolute;left:609px;top:376.66px;width:4.4px;height:1.0px;background:#6a6f75"></div><div style="position:absolute;left:611px;top:226.26px;width:1px;height:43.07px;background:#C6CBD0"></div><div style="position:absolute;left:611px;top:268.33px;width:4.4px;height:1.0px;background:#C6CBD0"></div><div style="position:absolute;left:611px;top:383.16px;width:1px;height:197.84px;background:#C6CBD0"></div><div style="position:absolute;left:619px;top:274.33px;width:57.3px;height:1.0px;border-top:1px dotted #3FA08F"></div><span style="position:absolute;left:Nonepx;top:150.8px;height:15.2px;line-height:15.2px;font:normal normal 11.2px/15.2px 'Liberation Mono', monospace;color:#4A9898;white-space:pre;transform-origin:0 50%;transform:scaleX(1.0000);left:auto;right:173.29999999999995px;">1</span><span style="position:absolute;left:Nonepx;top:166.49px;height:15.2px;line-height:15.2px;font:normal normal 11.2px/15.2px 'Liberation Mono', monospace;color:#4A9898;white-space:pre;transform-origin:0 50%;transform:scaleX(1.0000);left:auto;right:173.29999999999995px;">2</span><span style="position:absolute;left:Nonepx;top:182.18px;height:15.2px;line-height:15.2px;font:normal normal 11.2px/15.2px 'Liberation Mono', monospace;color:#4A9898;white-space:pre;transform-origin:0 50%;transform:scaleX(1.0000);left:auto;right:173.29999999999995px;">3</span><span style="position:absolute;left:Nonepx;top:197.87px;height:15.2px;line-height:15.2px;font:normal normal 11.2px/15.2px 'Liberation Mono', monospace;color:#4A9898;white-space:pre;transform-origin:0 50%;transform:scaleX(1.0000);left:auto;right:173.29999999999995px;">4</span><span style="position:absolute;left:Nonepx;top:213.56px;height:15.2px;line-height:15.2px;font:normal normal 11.2px/15.2px 'Liberation Mono', monospace;color:#4A9898;white-space:pre;transform-origin:0 50%;transform:scaleX(1.0000);left:auto;right:173.29999999999995px;">5</span><span style="position:absolute;left:Nonepx;top:229.25px;height:15.2px;line-height:15.2px;font:normal normal 11.2px/15.2px 'Liberation Mono', monospace;color:#4A9898;white-space:pre;transform-origin:0 50%;transform:scaleX(1.0000);left:auto;right:173.29999999999995px;">6</span><span style="position:absolute;left:Nonepx;top:244.94px;height:15.2px;line-height:15.2px;font:normal normal 11.2px/15.2px 'Liberation Mono', monospace;color:#4A9898;white-space:pre;transform-origin:0 50%;transform:scaleX(1.0000);left:auto;right:173.29999999999995px;">7</span><span style="position:absolute;left:Nonepx;top:260.63px;height:15.2px;line-height:15.2px;font:normal normal 11.2px/15.2px 'Liberation Mono', monospace;color:#4A9898;white-space:pre;transform-origin:0 50%;transform:scaleX(1.0000);left:auto;right:173.29999999999995px;">8</span><span style="position:absolute;left:Nonepx;top:276.32px;height:15.2px;line-height:15.2px;font:normal normal 11.2px/15.2px 'Liberation Mono', monospace;color:#4A9898;white-space:pre;transform-origin:0 50%;transform:scaleX(1.0000);left:auto;right:173.29999999999995px;">9</span><span style="position:absolute;left:Nonepx;top:292.01px;height:15.2px;line-height:15.2px;font:normal normal 11.2px/15.2px 'Liberation Mono', monospace;color:#4A9898;white-space:pre;transform-origin:0 50%;transform:scaleX(1.0000);left:auto;right:173.29999999999995px;">10</span><span style="position:absolute;left:Nonepx;top:307.7px;height:15.2px;line-height:15.2px;font:normal normal 11.2px/15.2px 'Liberation Mono', monospace;color:#4A9898;white-space:pre;transform-origin:0 50%;transform:scaleX(1.0000);left:auto;right:173.29999999999995px;">11</span><span style="position:absolute;left:Nonepx;top:323.39px;height:15.2px;line-height:15.2px;font:normal normal 11.2px/15.2px 'Liberation Mono', monospace;color:#4A9898;white-space:pre;transform-origin:0 50%;transform:scaleX(1.0000);left:auto;right:173.29999999999995px;">12</span><span style="position:absolute;left:Nonepx;top:339.08px;height:15.2px;line-height:15.2px;font:normal normal 11.2px/15.2px 'Liberation Mono', monospace;color:#4A9898;white-space:pre;transform-origin:0 50%;transform:scaleX(1.0000);left:auto;right:173.29999999999995px;">13</span><span style="position:absolute;left:Nonepx;top:354.77px;height:15.2px;line-height:15.2px;font:normal normal 11.2px/15.2px 'Liberation Mono', monospace;color:#4A9898;white-space:pre;transform-origin:0 50%;transform:scaleX(1.0000);left:auto;right:173.29999999999995px;">14</span><span style="position:absolute;left:Nonepx;top:370.46px;height:15.2px;line-height:15.2px;font:normal normal 11.2px/15.2px 'Liberation Mono', monospace;color:#4A9898;white-space:pre;transform-origin:0 50%;transform:scaleX(1.0000);left:auto;right:173.29999999999995px;">15</span><span style="position:absolute;left:Nonepx;top:386.15px;height:15.2px;line-height:15.2px;font:normal normal 11.2px/15.2px 'Liberation Mono', monospace;color:#4A9898;white-space:pre;transform-origin:0 50%;transform:scaleX(1.0000);left:auto;right:173.29999999999995px;">16</span><span style="position:absolute;left:Nonepx;top:401.84px;height:15.2px;line-height:15.2px;font:normal normal 11.2px/15.2px 'Liberation Mono', monospace;color:#4A9898;white-space:pre;transform-origin:0 50%;transform:scaleX(1.0000);left:auto;right:173.29999999999995px;">17</span><span style="position:absolute;left:Nonepx;top:417.53px;height:15.2px;line-height:15.2px;font:normal normal 11.2px/15.2px 'Liberation Mono', monospace;color:#4A9898;white-space:pre;transform-origin:0 50%;transform:scaleX(1.0000);left:auto;right:173.29999999999995px;">18</span><span style="position:absolute;left:Nonepx;top:433.22px;height:15.2px;line-height:15.2px;font:normal normal 11.2px/15.2px 'Liberation Mono', monospace;color:#4A9898;white-space:pre;transform-origin:0 50%;transform:scaleX(1.0000);left:auto;right:173.29999999999995px;">19</span><span style="position:absolute;left:Nonepx;top:448.91px;height:15.2px;line-height:15.2px;font:normal normal 11.2px/15.2px 'Liberation Mono', monospace;color:#4A9898;white-space:pre;transform-origin:0 50%;transform:scaleX(1.0000);left:auto;right:173.29999999999995px;">20</span><span style="position:absolute;left:Nonepx;top:464.6px;height:15.2px;line-height:15.2px;font:normal normal 11.2px/15.2px 'Liberation Mono', monospace;color:#4A9898;white-space:pre;transform-origin:0 50%;transform:scaleX(1.0000);left:auto;right:173.29999999999995px;">21</span><span style="position:absolute;left:Nonepx;top:480.29px;height:15.2px;line-height:15.2px;font:normal normal 11.2px/15.2px 'Liberation Mono', monospace;color:#4A9898;white-space:pre;transform-origin:0 50%;transform:scaleX(1.0000);left:auto;right:173.29999999999995px;">22</span><span style="position:absolute;left:Nonepx;top:495.98px;height:15.2px;line-height:15.2px;font:normal normal 11.2px/15.2px 'Liberation Mono', monospace;color:#4A9898;white-space:pre;transform-origin:0 50%;transform:scaleX(1.0000);left:auto;right:173.29999999999995px;">23</span><span style="position:absolute;left:Nonepx;top:511.67px;height:15.2px;line-height:15.2px;font:normal normal 11.2px/15.2px 'Liberation Mono', monospace;color:#4A9898;white-space:pre;transform-origin:0 50%;transform:scaleX(1.0000);left:auto;right:173.29999999999995px;">24</span><span style="position:absolute;left:Nonepx;top:527.36px;height:15.2px;line-height:15.2px;font:normal normal 11.2px/15.2px 'Liberation Mono', monospace;color:#4A9898;white-space:pre;transform-origin:0 50%;transform:scaleX(1.0000);left:auto;right:173.29999999999995px;">25</span><span style="position:absolute;left:Nonepx;top:543.05px;height:15.2px;line-height:15.2px;font:normal normal 11.2px/15.2px 'Liberation Mono', monospace;color:#4A9898;white-space:pre;transform-origin:0 50%;transform:scaleX(1.0000);left:auto;right:173.29999999999995px;">26</span><span style="position:absolute;left:Nonepx;top:558.74px;height:15.2px;line-height:15.2px;font:normal normal 11.2px/15.2px 'Liberation Mono', monospace;color:#4A9898;white-space:pre;transform-origin:0 50%;transform:scaleX(1.0000);left:auto;right:173.29999999999995px;">27</span><span style="position:absolute;left:Nonepx;top:574.43px;height:15.2px;line-height:15.2px;font:normal normal 11.2px/15.2px 'Liberation Mono', monospace;color:#4A9898;white-space:pre;transform-origin:0 50%;transform:scaleX(1.0000);left:auto;right:173.29999999999995px;">28</span><span style="position:absolute;left:619.0px;top:151.44px;height:15.72px;line-height:15.72px;font:normal bold 11.72px/15.72px 'Liberation Mono', monospace;color:#2E2EF2;white-space:pre;transform-origin:0 50%;transform:scaleX(0.9997);">REPORT</span><span style="position:absolute;left:661.18px;top:151.44px;height:15.72px;line-height:15.72px;font:normal normal 11.72px/15.72px 'Liberation Mono', monospace;color:#1a1a1a;white-space:pre;transform-origin:0 50%;transform:scaleX(0.9997);"> zcrm_order_read.</span><span style="position:absolute;left:619.0px;top:182.82px;height:15.72px;line-height:15.72px;font:normal bold 11.72px/15.72px 'Liberation Mono', monospace;color:#2E2EF2;white-space:pre;transform-origin:0 50%;transform:scaleX(0.9997);">TYPE<span style="color:#77778c">-</span>POOLS</span><span style="position:absolute;left:689.3px;top:182.82px;height:15.72px;line-height:15.72px;font:normal normal 11.72px/15.72px 'Liberation Mono', monospace;color:#1a1a1a;white-space:pre;transform-origin:0 50%;transform:scaleX(0.9997);">: abap.</span><span style="position:absolute;left:619.0px;top:214.2px;height:15.72px;line-height:15.72px;font:normal bold 11.72px/15.72px 'Liberation Mono', monospace;color:#2E2EF2;white-space:pre;transform-origin:0 50%;transform:scaleX(0.9997);">DEFINE</span><span style="position:absolute;left:661.18px;top:214.2px;height:15.72px;line-height:15.72px;font:normal normal 11.72px/15.72px 'Liberation Mono', monospace;color:#1a1a1a;white-space:pre;transform-origin:0 50%;transform:scaleX(0.9997);"> add_text.</span><span style="position:absolute;left:619.0px;top:229.89px;height:15.72px;line-height:15.72px;font:normal normal 11.72px/15.72px 'Liberation Mono', monospace;color:#1a1a1a;white-space:pre;transform-origin:0 50%;transform:scaleX(0.9997);">  gv_text = &1.</span><span style="position:absolute;left:619.0px;top:245.58px;height:15.72px;line-height:15.72px;font:normal bold 11.72px/15.72px 'Liberation Mono', monospace;color:#2E2EF2;white-space:pre;transform-origin:0 50%;transform:scaleX(0.9997);">  APPEND</span><span style="position:absolute;left:675.24px;top:245.58px;height:15.72px;line-height:15.72px;font:normal normal 11.72px/15.72px 'Liberation Mono', monospace;color:#1a1a1a;white-space:pre;transform-origin:0 50%;transform:scaleX(0.9997);"> gv_text </span><span style="position:absolute;left:738.51px;top:245.58px;height:15.72px;line-height:15.72px;font:normal bold 11.72px/15.72px 'Liberation Mono', monospace;color:#2E2EF2;white-space:pre;transform-origin:0 50%;transform:scaleX(0.9997);">TO</span><span style="position:absolute;left:619.0px;top:261.27px;height:15.72px;line-height:15.72px;font:normal bold 11.72px/15.72px 'Liberation Mono', monospace;color:#2E2EF2;white-space:pre;transform-origin:0 50%;transform:scaleX(0.9997);">END<span style="color:#77778c">-</span>OF<span style="color:#77778c">-</span>DEFINITION</span><span style="position:absolute;left:738.51px;top:261.27px;height:15.72px;line-height:15.72px;font:normal normal 11.72px/15.72px 'Liberation Mono', monospace;color:#1a1a1a;white-space:pre;transform-origin:0 50%;transform:scaleX(0.9997);">.</span><span style="position:absolute;left:619.0px;top:292.65px;height:15.72px;line-height:15.72px;font:normal bold 11.72px/15.72px 'Liberation Mono', monospace;color:#2E2EF2;white-space:pre;transform-origin:0 50%;transform:scaleX(0.9997);">INCLUDE</span><span style="position:absolute;left:668.21px;top:292.65px;height:15.72px;line-height:15.72px;font:normal normal 11.72px/15.72px 'Liberation Mono', monospace;color:#1a1a1a;white-space:pre;transform-origin:0 50%;transform:scaleX(0.9997);"> crm_object_names_con.</span><span style="position:absolute;left:619.0px;top:308.34px;height:15.72px;line-height:15.72px;font:italic normal 11.72px/15.72px 'Liberation Mono', monospace;color:#8f8f8f;white-space:pre;transform-origin:0 50%;transform:scaleX(0.9997);">*INCLUDE crm_object_kinds_con.</span><span style="position:absolute;left:619.0px;top:339.72px;height:15.72px;line-height:15.72px;font:normal bold 11.72px/15.72px 'Liberation Mono', monospace;color:#2E2EF2;white-space:pre;transform-origin:0 50%;transform:scaleX(0.9997);">TABLES</span><span style="position:absolute;left:661.18px;top:339.72px;height:15.72px;line-height:15.72px;font:normal bold 11.72px/15.72px 'Liberation Mono', monospace;color:#C020C0;white-space:pre;transform-origin:0 50%;transform:scaleX(0.9997);">:</span><span style="position:absolute;left:668.2099999999999px;top:339.72px;height:15.72px;line-height:15.72px;font:normal normal 11.72px/15.72px 'Liberation Mono', monospace;color:#1a1a1a;white-space:pre;transform-origin:0 50%;transform:scaleX(0.9997);"> crmd_orderadm_h.</span><span style="position:absolute;left:619.0px;top:371.1px;height:15.72px;line-height:15.72px;font:normal bold 11.72px/15.72px 'Liberation Mono', monospace;color:#2E2EF2;white-space:pre;transform-origin:0 50%;transform:scaleX(0.9997);">SELECTION<span style="color:#77778c">-</span>SCREEN</span><span style="position:absolute;left:731.48px;top:371.1px;height:15.72px;line-height:15.72px;font:normal bold 11.72px/15.72px 'Liberation Mono', monospace;color:#2E2EF2;white-space:pre;transform-origin:0 50%;transform:scaleX(0.9997);"> BEGIN OF BLOCK</span><span style="position:absolute;left:619.0px;top:386.79px;height:15.72px;line-height:15.72px;font:normal bold 11.72px/15.72px 'Liberation Mono', monospace;color:#2E2EF2;white-space:pre;transform-origin:0 50%;transform:scaleX(0.9997);">SELECT<span style="color:#77778c">-</span>OPTIONS</span><span style="position:absolute;left:717.42px;top:386.79px;height:15.72px;line-height:15.72px;font:normal normal 11.72px/15.72px 'Liberation Mono', monospace;color:#1a1a1a;white-space:pre;transform-origin:0 50%;transform:scaleX(0.9997);">: s_guid </span><span style="position:absolute;left:780.6899999999999px;top:386.79px;height:15.72px;line-height:15.72px;font:normal bold 11.72px/15.72px 'Liberation Mono', monospace;color:#2E2EF2;white-space:pre;transform-origin:0 50%;transform:scaleX(0.9997);">FOR</span><span style="position:absolute;left:619.0px;top:449.55px;height:15.72px;line-height:15.72px;font:normal bold 11.72px/15.72px 'Liberation Mono', monospace;color:#2E2EF2;white-space:pre;transform-origin:0 50%;transform:scaleX(0.9997);">PARAMETERS</span><span style="position:absolute;left:689.3px;top:449.55px;height:15.72px;line-height:15.72px;font:normal normal 11.72px/15.72px 'Liberation Mono', monospace;color:#1a1a1a;white-space:pre;transform-origin:0 50%;transform:scaleX(0.9997);">: p_head </span><span style="position:absolute;left:619.0px;top:465.24px;height:15.72px;line-height:15.72px;font:normal bold 11.72px/15.72px 'Liberation Mono', monospace;color:#2E2EF2;white-space:pre;transform-origin:0 50%;transform:scaleX(0.9997);">SELECT<span style="color:#77778c">-</span>OPTIONS</span><span style="position:absolute;left:717.42px;top:465.24px;height:15.72px;line-height:15.72px;font:normal normal 11.72px/15.72px 'Liberation Mono', monospace;color:#1a1a1a;white-space:pre;transform-origin:0 50%;transform:scaleX(0.9997);">: s_item </span><span style="position:absolute;left:619.0px;top:480.93px;height:15.72px;line-height:15.72px;font:normal bold 11.72px/15.72px 'Liberation Mono', monospace;color:#2E2EF2;white-space:pre;transform-origin:0 50%;transform:scaleX(0.9997);">PARAMETERS</span><span style="position:absolute;left:689.3px;top:480.93px;height:15.72px;line-height:15.72px;font:normal normal 11.72px/15.72px 'Liberation Mono', monospace;color:#1a1a1a;white-space:pre;transform-origin:0 50%;transform:scaleX(0.9997);">: p_item </span><span style="position:absolute;left:619.0px;top:496.62px;height:15.72px;line-height:15.72px;font:normal bold 11.72px/15.72px 'Liberation Mono', monospace;color:#2E2EF2;white-space:pre;transform-origin:0 50%;transform:scaleX(0.9997);">PARAMETERS</span><span style="position:absolute;left:689.3px;top:496.62px;height:15.72px;line-height:15.72px;font:normal normal 11.72px/15.72px 'Liberation Mono', monospace;color:#1a1a1a;white-space:pre;transform-origin:0 50%;transform:scaleX(0.9997);">: p_part </span><span style="position:absolute;left:619.0px;top:512.31px;height:15.72px;line-height:15.72px;font:normal bold 11.72px/15.72px 'Liberation Mono', monospace;color:#2E2EF2;white-space:pre;transform-origin:0 50%;transform:scaleX(0.9997);">PARAMETERS</span><span style="position:absolute;left:689.3px;top:512.31px;height:15.72px;line-height:15.72px;font:normal normal 11.72px/15.72px 'Liberation Mono', monospace;color:#1a1a1a;white-space:pre;transform-origin:0 50%;transform:scaleX(0.9997);">: p_stat </span><span style="position:absolute;left:619.0px;top:528.0px;height:15.72px;line-height:15.72px;font:normal bold 11.72px/15.72px 'Liberation Mono', monospace;color:#2E2EF2;white-space:pre;transform-origin:0 50%;transform:scaleX(0.9997);">SELECTION<span style="color:#77778c">-</span>SCREEN</span><span style="position:absolute;left:731.48px;top:528.0px;height:15.72px;line-height:15.72px;font:normal bold 11.72px/15.72px 'Liberation Mono', monospace;color:#2E2EF2;white-space:pre;transform-origin:0 50%;transform:scaleX(0.9997);"> END OF</span><span style="position:absolute;left:619.0px;top:559.38px;height:15.72px;line-height:15.72px;font:normal bold 11.72px/15.72px 'Liberation Mono', monospace;color:#2E2EF2;white-space:pre;transform-origin:0 50%;transform:scaleX(0.9997);">SELECTION<span style="color:#77778c">-</span>SCREEN</span><span style="position:absolute;left:731.48px;top:559.38px;height:15.72px;line-height:15.72px;font:normal bold 11.72px/15.72px 'Liberation Mono', monospace;color:#2E2EF2;white-space:pre;transform-origin:0 50%;transform:scaleX(0.9997);"> BEGIN OF</span><span style="position:absolute;left:619.0px;top:575.07px;height:15.72px;line-height:15.72px;font:normal bold 11.72px/15.72px 'Liberation Mono', monospace;color:#2E2EF2;white-space:pre;transform-origin:0 50%;transform:scaleX(0.9997);">PARAMETERS</span><span style="position:absolute;left:689.3px;top:575.07px;height:15.72px;line-height:15.72px;font:normal normal 11.72px/15.72px 'Liberation Mono', monospace;color:#1a1a1a;white-space:pre;transform-origin:0 50%;transform:scaleX(0.9997);">: p_log </span></div></div><div style="position:absolute;left:281px;top:249.5px;width:161px;height:250.5px;overflow:hidden;background:#fff;box-shadow:-1px 0 0 0 rgba(150,155,165,.5),2px 2px 2px 1px rgba(0,0,0,.5)"><div style="position:absolute;left:-281px;top:-249.5px;width:768px;height:1024px"><div style="position:absolute;left:283px;top:478px;width:155.8px;height:20.6px;background:#FBD673"></div><div style="position:absolute;left:283px;top:311.9px;width:157px;height:1.2px;background:#C9D1DB"></div><div style="position:absolute;left:283px;top:374px;width:157px;height:1.2px;background:#C9D1DB"></div><div style="position:absolute;left:283px;top:436px;width:157px;height:1.2px;background:#C9D1DB"></div><svg style="position:absolute;left:428.2px;top:258.7px" width="5.2" height="8.6" viewBox="0 0 5.2 8.6"><path d="M0.2 0.2L5 4.3L0.2 8.4z" fill="#111"/></svg><svg style="position:absolute;left:428.2px;top:298.9px" width="5.2" height="8.6" viewBox="0 0 5.2 8.6"><path d="M0.2 0.2L5 4.3L0.2 8.4z" fill="#111"/></svg><svg style="position:absolute;left:428.2px;top:319.9px" width="5.2" height="8.6" viewBox="0 0 5.2 8.6"><path d="M0.2 0.2L5 4.3L0.2 8.4z" fill="#111"/></svg><svg style="position:absolute;left:428.2px;top:360.7px" width="5.2" height="8.6" viewBox="0 0 5.2 8.6"><path d="M0.2 0.2L5 4.3L0.2 8.4z" fill="#111"/></svg><svg style="position:absolute;left:428.2px;top:484.5px" width="5.2" height="8.6" viewBox="0 0 5.2 8.6"><path d="M0.2 0.2L5 4.3L0.2 8.4z" fill="#111"/></svg><span style="position:absolute;left:305.75px;top:255.0px;height:16px;line-height:16px;font:normal normal 12px/16px 'Liberation Sans', sans-serif;color:#1c1c1c;white-space:pre;transform-origin:0 50%;transform:scaleX(0.8812);-webkit-text-stroke:0.22px;"><u>C</u>reate</span><span style="position:absolute;left:305.75px;top:275.0px;height:16px;line-height:16px;font:normal normal 12px/16px 'Liberation Sans', sans-serif;color:#1c1c1c;white-space:pre;transform-origin:0 50%;transform:scaleX(0.8559);-webkit-text-stroke:0.22px;">Ch<u>a</u>nge</span><span style="position:absolute;left:305.75px;top:295.2px;height:16px;line-height:16px;font:normal normal 12px/16px 'Liberation Sans', sans-serif;color:#1c1c1c;white-space:pre;transform-origin:0 50%;transform:scaleX(0.8194);-webkit-text-stroke:0.22px;"><u>D</u>isplay</span><span style="position:absolute;left:305.75px;top:316.2px;height:16px;line-height:16px;font:normal normal 12px/16px 'Liberation Sans', sans-serif;color:#1c1c1c;white-space:pre;transform-origin:0 50%;transform:scaleX(0.8742);-webkit-text-stroke:0.22px;"><u>C</u>heck</span><span style="position:absolute;left:305.75px;top:336.6px;height:16px;line-height:16px;font:normal normal 12px/16px 'Liberation Sans', sans-serif;color:#1c1c1c;white-space:pre;transform-origin:0 50%;transform:scaleX(0.9308);-webkit-text-stroke:0.22px;">A<u>c</u>tivate</span><span style="position:absolute;left:305.75px;top:357.0px;height:16px;line-height:16px;font:normal normal 12px/16px 'Liberation Sans', sans-serif;color:#1c1c1c;white-space:pre;transform-origin:0 50%;transform:scaleX(0.9164);-webkit-text-stroke:0.22px;"><u>E</u>xecute</span><span style="position:absolute;left:305.75px;top:378.2px;height:16px;line-height:16px;font:normal normal 12px/16px 'Liberation Sans', sans-serif;color:#1c1c1c;white-space:pre;transform-origin:0 50%;transform:scaleX(0.9083);-webkit-text-stroke:0.22px;">C<u>o</u>py...</span><span style="position:absolute;left:305.75px;top:398.6px;height:16px;line-height:16px;font:normal normal 12px/16px 'Liberation Sans', sans-serif;color:#1c1c1c;white-space:pre;transform-origin:0 50%;transform:scaleX(0.8982);-webkit-text-stroke:0.22px;">R<u>e</u>name...</span><span style="position:absolute;left:305.75px;top:419.0px;height:16px;line-height:16px;font:normal normal 12px/16px 'Liberation Sans', sans-serif;color:#1c1c1c;white-space:pre;transform-origin:0 50%;transform:scaleX(0.9149);-webkit-text-stroke:0.22px;">De<u>l</u>ete</span><span style="position:absolute;left:305.75px;top:440.0px;height:16px;line-height:16px;font:normal normal 12px/16px 'Liberation Sans', sans-serif;color:#1c1c1c;white-space:pre;transform-origin:0 50%;transform:scaleX(0.9007);-webkit-text-stroke:0.22px;">Where-<u>U</u>sed List</span><span style="position:absolute;left:305.75px;top:460.8px;height:16px;line-height:16px;font:normal normal 12px/16px 'Liberation Sans', sans-serif;color:#1c1c1c;white-space:pre;transform-origin:0 50%;transform:scaleX(0.8918);-webkit-text-stroke:0.22px;"><u>F</u>ind...</span><span style="position:absolute;left:305.75px;top:480.8px;height:16px;line-height:16px;font:normal normal 12px/16px 'Liberation Sans', sans-serif;color:#1c1c1c;white-space:pre;transform-origin:0 50%;transform:scaleX(0.9068);-webkit-text-stroke:0.22px;"><u>A</u>dditional Functions</span></div></div><div style="position:absolute;left:439px;top:476.3px;width:207.3px;height:163.7px;overflow:hidden;background:#fff;box-shadow:-1px 0 0 0 rgba(150,155,165,.5),2px 2px 2px 1px rgba(0,0,0,.5)"><div style="position:absolute;left:-439px;top:-476.3px;width:768px;height:1024px"><div style="position:absolute;left:440px;top:540.2px;width:205.2px;height:19.8px;background:#FBD673"></div><div style="position:absolute;left:441px;top:517.9px;width:203px;height:1.2px;background:#C9D1DB"></div><div style="position:absolute;left:441px;top:580px;width:203px;height:1.2px;background:#C9D1DB"></div><div style="position:absolute;left:441px;top:601.5px;width:203px;height:1.2px;background:#C9D1DB"></div><svg style="position:absolute;left:633.4px;top:505.09999999999997px" width="5.2" height="8.6" viewBox="0 0 5.2 8.6"><path d="M0.2 0.2L5 4.3L0.2 8.4z" fill="#111"/></svg><span style="position:absolute;left:462.3px;top:481.3px;height:16px;line-height:16px;font:normal normal 12px/16px 'Liberation Sans', sans-serif;color:#1c1c1c;white-space:pre;transform-origin:0 50%;transform:scaleX(0.9423);-webkit-text-stroke:0.22px;">P<u>r</u>int...</span><span style="position:absolute;left:462.3px;top:501.4px;height:16px;line-height:16px;font:normal normal 12px/16px 'Liberation Sans', sans-serif;color:#1c1c1c;white-space:pre;transform-origin:0 50%;transform:scaleX(0.9217);-webkit-text-stroke:0.22px;"><u>D</u>ocumentation</span><span style="position:absolute;left:462.3px;top:522.7px;height:16px;line-height:16px;font:normal normal 12px/16px 'Liberation Sans', sans-serif;color:#1c1c1c;white-space:pre;transform-origin:0 50%;transform:scaleX(0.9121);-webkit-text-stroke:0.22px;">Display O<u>b</u>ject Directory Entry</span><span style="position:absolute;left:462.3px;top:542.3px;height:16px;line-height:16px;font:normal normal 12px/16px 'Liberation Sans', sans-serif;color:#1c1c1c;white-space:pre;transform-origin:0 50%;transform:scaleX(0.8916);-webkit-text-stroke:0.22px;">C<u>h</u>ange Package Assignment</span><span style="position:absolute;left:462.3px;top:563.0px;height:16px;line-height:16px;font:normal normal 12px/16px 'Liberation Sans', sans-serif;color:#1c1c1c;white-space:pre;transform-origin:0 50%;transform:scaleX(0.9456);-webkit-text-stroke:0.22px;"><u>W</u>rite Transport Entry</span><span style="position:absolute;left:462.3px;top:584.6px;height:16px;line-height:16px;font:normal normal 12px/16px 'Liberation Sans', sans-serif;color:#1c1c1c;white-space:pre;transform-origin:0 50%;transform:scaleX(0.9056);-webkit-text-stroke:0.22px;"><u>V</u>ersion Management</span><span style="position:absolute;left:462.3px;top:605.3px;height:16px;line-height:16px;font:normal normal 12px/16px 'Liberation Sans', sans-serif;color:#1c1c1c;white-space:pre;transform-origin:0 50%;transform:scaleX(0.9034);-webkit-text-stroke:0.22px;">Rebuild <u>O</u>bject List</span></div></div></div></div></body></html>
